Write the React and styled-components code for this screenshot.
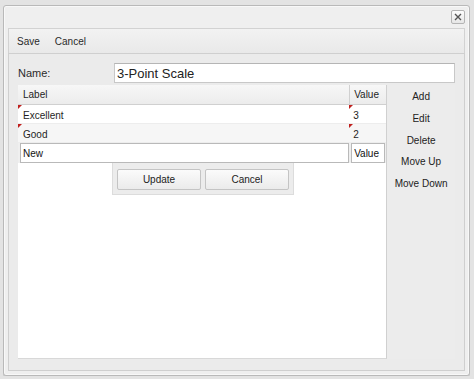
import React from 'react';
import styled, { createGlobalStyle } from 'styled-components';

const GlobalStyle = createGlobalStyle`
  html, body {
    margin: 0;
    padding: 0;
    background: #e3e3e3;
    font-family: "Liberation Sans", Arial, sans-serif;
    font-size: 10px;
    color: #222;
  }
`;

const rows = [
  { label: 'Excellent', value: '3' },
  { label: 'Good', value: '2' },
];

const actions = ['Add', 'Edit', 'Delete', 'Move Up', 'Move Down'];

export default function App() {
  return (
    <>
      <GlobalStyle />
      <Window>
        <TitleBar>
          <CloseButton aria-label="close">
            <svg width="8" height="8" viewBox="0 0 8 8">
              <path d="M1 1L7 7M7 1L1 7" stroke="#555" strokeWidth="1.4" />
            </svg>
          </CloseButton>
        </TitleBar>
        <Toolbar>
          <ToolButton>Save</ToolButton>
          <ToolButton>Cancel</ToolButton>
        </Toolbar>
        <Panel>
          <NameRow>
            <NameLabel>Name:</NameLabel>
            <NameInput defaultValue="3-Point Scale" />
          </NameRow>
          <Main>
            <Grid>
              <GridRow $header>
                <Cell $header>Label</Cell>
                <Cell $header $value>Value</Cell>
              </GridRow>
              {rows.map((r, i) => (
                <GridRow key={r.label} $alt={i % 2 === 1}>
                  <Cell $dirty>{r.label}</Cell>
                  <Cell $dirty $value>{r.value}</Cell>
                </GridRow>
              ))}
              <EditorRow>
                <EditInput defaultValue="New" autoFocus />
                <EditInput $value defaultValue="Value" />
              </EditorRow>
              <EditorButtons>
                <Button>Update</Button>
                <Button>Cancel</Button>
              </EditorButtons>
            </Grid>
            <Actions>
              {actions.map((a) => (
                <ActionButton key={a}>{a}</ActionButton>
              ))}
            </Actions>
          </Main>
        </Panel>
      </Window>
    </>
  );
}

const Window = styled.div`
  margin: 5px 0 0 3px;
  width: 467px;
  height: 371px;
  box-sizing: border-box;
  border: 1px solid #b9b9b9;
  border-radius: 3px;
  background: #efefef;
  box-shadow: inset 0 0 0 1px #f8f8f8, 0 1px 0 #c8c8c8;
  padding: 0 4px 4px;
  display: flex;
  flex-direction: column;
`;

const TitleBar = styled.div`
  height: 22px;
  display: flex;
  justify-content: flex-end;
  align-items: flex-end;
`;

const CloseButton = styled.div`
  width: 12px;
  height: 12px;
  margin-bottom: 4px;
  border: 1px solid #b4b4b4;
  border-radius: 2px;
  background: linear-gradient(#fdfdfd, #e6e6e6);
  display: flex;
  align-items: center;
  justify-content: center;
`;

const Toolbar = styled.div`
  height: 24px;
  border: 1px solid #d2d2d2;
  border-bottom: none;
  background: linear-gradient(#f2f2f2, #e9e9e9);
  display: flex;
  align-items: center;
  gap: 15px;
  padding-left: 8px;
`;

const ToolButton = styled.span`
  font-size: 10px;
  color: #2a2a2a;
`;

const Panel = styled.div`
  flex: 1;
  border: 1px solid #cfcfcf;
  background: #ebebeb;
  padding: 9px 9px 11px 9px;
  display: flex;
  flex-direction: column;
  gap: 2px;
`;

const NameRow = styled.div`
  display: flex;
  align-items: center;
  height: 20px;
`;

const NameLabel = styled.label`
  width: 96px;
  font-size: 11px;
  color: #2a2a2a;
`;

const NameInput = styled.input`
  flex: 1;
  height: 20px;
  box-sizing: border-box;
  border: 1px solid #c8c8c8;
  border-top-color: #b5b5b5;
  background: #fff;
  font-family: "Liberation Sans", Arial, sans-serif;
  font-size: 13px;
  padding: 0 2px;
  color: #222;
  outline: none;
`;

const Main = styled.div`
  flex: 1;
  display: flex;
`;

const Grid = styled.div`
  position: relative;
  width: 369px;
  background: #fff;
  border-right: 1px solid #d0d0d0;
  border-bottom: 1px solid #d8d8d8;
`;

const GridRow = styled.div`
  display: flex;
  height: ${(p) => (p.$header ? 20 : 19)}px;
  background: ${(p) => (p.$header ? 'linear-gradient(#f7f7f7, #ececec)' : p.$alt ? '#f6f6f6' : '#fff')};
  border-bottom: 1px solid ${(p) => (p.$header ? '#d0d0d0' : '#ededed')};
  box-sizing: border-box;
`;

const Cell = styled.div`
  position: relative;
  ${(p) => (p.$value ? 'width: 37px;' : 'flex: 1;')}
  display: flex;
  align-items: center;
  padding-left: ${(p) => (p.$value ? 4 : 5)}px;
  padding-top: ${(p) => (p.$dirty ? 2 : 0)}px;
  font-size: 10px;
  color: #1e1e1e;
  border-left: ${(p) => (p.$header && p.$value ? '1px solid #d0d0d0' : 'none')};
  box-sizing: border-box;
  &::before {
    content: '';
    display: ${(p) => (p.$dirty ? 'block' : 'none')};
    position: absolute;
    top: 0;
    left: 0;
    border-top: 4px solid #c0201e;
    border-right: 4px solid transparent;
  }
`;

const EditorRow = styled.div`
  display: flex;
  gap: 2px;
  height: 20px;
  padding: 0 1px 0 2px;
  background: #efefef;
  box-sizing: border-box;
`;

const EditInput = styled.input`
  ${(p) => (p.$value ? 'width: 34px;' : 'flex: 1;')}
  min-width: 0;
  height: 20px;
  box-sizing: border-box;
  border: 1px solid #b9b9b9;
  background: #fff;
  font-family: "Liberation Sans", Arial, sans-serif;
  font-size: 10px;
  padding: 0 2px;
  color: #111;
  outline: none;
  caret-color: #000;
`;

const EditorButtons = styled.div`
  position: absolute;
  left: 94px;
  top: 78px;
  width: 182px;
  height: 32px;
  box-sizing: border-box;
  background: #ececec;
  border: 1px solid #dcdcdc;
  border-top: none;
  display: flex;
  gap: 4px;
  padding: 6px 4px 0 4px;
`;

const Button = styled.div`
  width: 85px;
  height: 21px;
  box-sizing: border-box;
  border: 1px solid #c4c4c4;
  border-radius: 2px;
  background: linear-gradient(#fbfbfb, #ebebeb);
  display: flex;
  align-items: center;
  justify-content: center;
  font-size: 10px;
  color: #222;
`;

const Actions = styled.div`
  width: 68px;
  background: #ececec;
  display: flex;
  flex-direction: column;
  padding-top: 1px;
`;

const ActionButton = styled.div`
  height: 21.7px;
  display: flex;
  align-items: center;
  justify-content: center;
  font-size: 10px;
  color: #222;
`;
